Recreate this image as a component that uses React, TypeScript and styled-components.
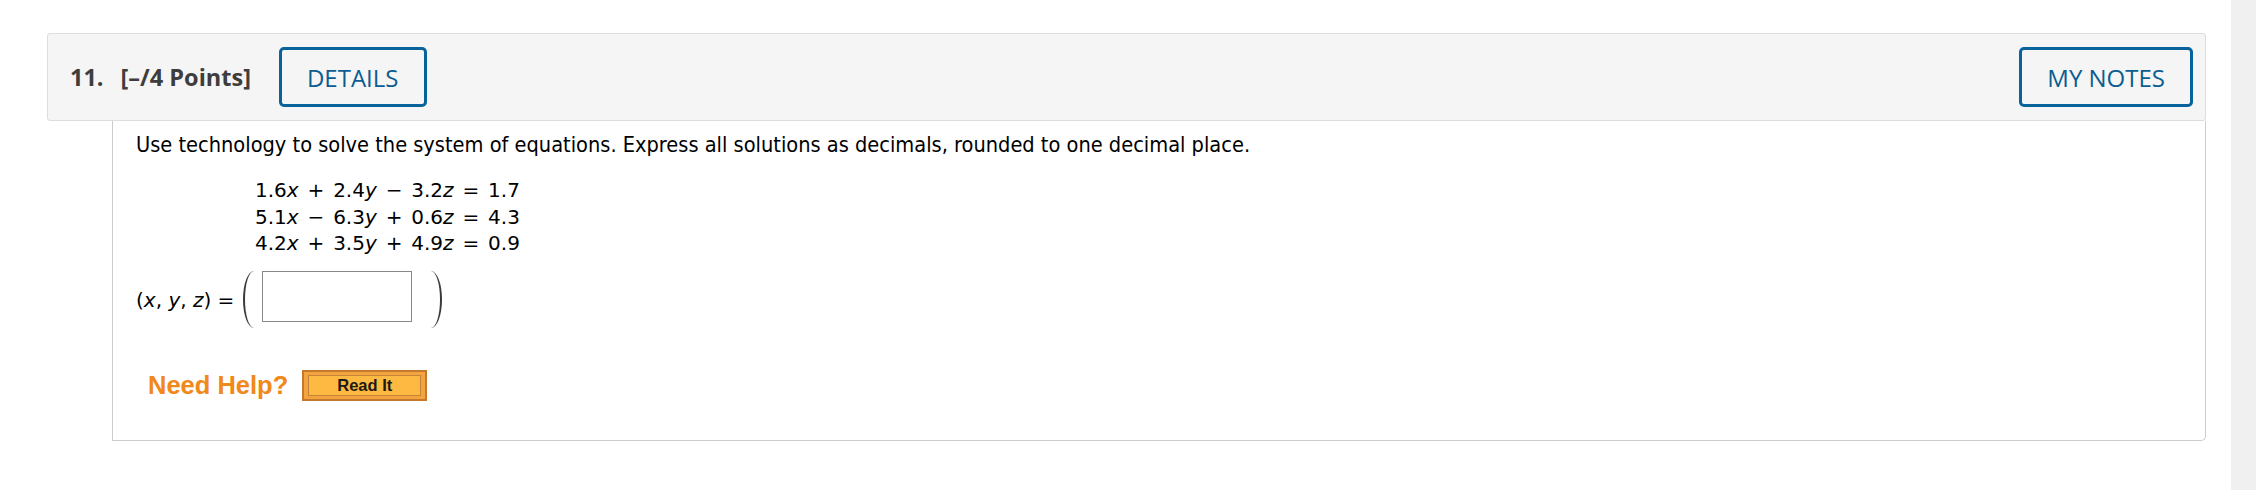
import React from "react";
import styled, { createGlobalStyle } from "styled-components";

const GlobalStyle = createGlobalStyle`
  html, body {
    margin: 0;
    padding: 0;
    background: #ffffff;
  }
  * {
    box-sizing: border-box;
  }
`;

const Page = styled.div`
  display: flex;
  min-height: 490px;
  width: 2256px;
`;

const Main = styled.main`
  flex: 1;
  padding: 33px 25px 0 47px;
`;

const Scrollbar = styled.div`
  width: 25px;
  background: #f0f0f0;
`;

const Header = styled.header`
  display: flex;
  align-items: center;
  height: 88px;
  padding: 0 12px 0 22px;
  background: #f5f5f5;
  border: 1px solid #dddddd;
  border-radius: 3px;
  font-family: "Open Sans", "Liberation Sans", sans-serif;
`;

const Number = styled.span`
  font-size: 23.5px;
  font-weight: 700;
  color: #3d3d3d;
  margin-right: 17px;
`;

const Points = styled.span`
  font-size: 23.5px;
  font-weight: 700;
  color: #3d3d3d;
  margin-right: 28px;
`;

const OutlineButton = styled.button<{ $push?: boolean }>`
  height: 60px;
  padding: 0 25px;
  margin-left: ${(p) => (p.$push ? "auto" : "0")};
  background: transparent;
  border: 3px solid #08639c;
  border-radius: 5px;
  font-family: "Open Sans", "Liberation Sans", sans-serif;
  font-size: 24px;
  font-weight: 400;
  color: #0b5d92;
  cursor: pointer;
`;

const Body = styled.section`
  margin-left: 65px;
  height: 320px;
  padding: 11px 23px 0 23px;
  border: 1px solid #cccccc;
  border-top: none;
  border-bottom-right-radius: 5px;
  color: #000000;
`;

const Prompt = styled.p`
  margin: 0;
  font-family: "DejaVu Sans Condensed", "DejaVu Sans", sans-serif;
  font-stretch: condensed;
  font-size: 21.6px;
  line-height: 25px;
`;

const Equations = styled.div`
  margin: 20px 0 0 119px;
  font-family: "DejaVu Sans", "Liberation Sans", sans-serif;
  font-size: 20px;
  line-height: 26.7px;
  word-spacing: 2.5px;
`;

const EqLine = styled.div`
  white-space: pre;
`;

const Var = styled.i`
  font-style: italic;
`;

const AnswerRow = styled.div`
  display: flex;
  align-items: center;
  height: 57px;
  margin-top: 14px;
  font-family: "DejaVu Sans", "Liberation Sans", sans-serif;
  font-size: 20px;
  line-height: 24px;
`;

const Label = styled.span`
  white-space: pre;
  margin-right: 9px;
`;

const Paren = styled.span<{ $right?: boolean }>`
  display: block;
  width: 22px;
  height: 57px;
  border-radius: 50%;
  border: 0 solid #3a3a3a;
  border-left-width: ${(p) => (p.$right ? "0" : "2.5px")};
  border-right-width: ${(p) => (p.$right ? "2.5px" : "0")};
  margin-left: ${(p) => (p.$right ? "-7px" : "0")};
  margin-right: ${(p) => (p.$right ? "0" : "-3px")};
`;

const AnswerInput = styled.input`
  align-self: flex-start;
  width: 150px;
  height: 51px;
  margin-right: 15px;
  border: 1px solid #888888;
  background: #ffffff;
  outline: none;
`;

const HelpRow = styled.div`
  display: flex;
  align-items: center;
  gap: 14px;
  margin-top: 42px;
  padding-left: 12px;
`;

const HelpText = styled.span`
  font-family: "Liberation Sans", Arial, sans-serif;
  font-size: 25.5px;
  font-weight: 700;
  color: #f0881a;
`;

const ReadButton = styled.button`
  width: 125px;
  height: 31px;
  padding: 3px 4px;
  background: #f4a43e;
  border: 2px solid #c47a2c;
  display: flex;
  cursor: pointer;
`;

const ReadInner = styled.span`
  flex: 1;
  display: flex;
  align-items: center;
  justify-content: center;
  background: #fdb942;
  border: 1px solid #c3843a;
  font-family: "Liberation Sans", Arial, sans-serif;
  font-size: 16.5px;
  font-weight: 700;
  color: #1d1a14;
`;

const equations: [string, string, string, string, string, string][] = [
  ["1.6", "+", "2.4", "\u2212", "3.2", "1.7"],
  ["5.1", "\u2212", "6.3", "+", "0.6", "4.3"],
  ["4.2", "+", "3.5", "+", "4.9", "0.9"],
];

export default function App() {
  return (
    <>
      <GlobalStyle />
      <Page>
        <Main>
          <Header>
            <Number>11.</Number>
            <Points>[&ndash;/4 Points]</Points>
            <OutlineButton>DETAILS</OutlineButton>
            <OutlineButton $push>MY NOTES</OutlineButton>
          </Header>
          <Body>
            <Prompt>
              Use technology to solve the system of equations. Express all solutions as decimals,
              rounded to one decimal place.
            </Prompt>
            <Equations>
              {equations.map(([a, op1, b, op2, c, r]) => (
                <EqLine key={a + b + c}>
                  {a}
                  <Var>x</Var> {op1} {b}
                  <Var>y</Var> {op2} {c}
                  <Var>z</Var> = {r}
                </EqLine>
              ))}
            </Equations>
            <AnswerRow>
              <Label>
                (<Var>x</Var>, <Var>y</Var>, <Var>z</Var>) =
              </Label>
              <Paren />
              <AnswerInput type="text" aria-label="answer" />
              <Paren $right />
            </AnswerRow>
            <HelpRow>
              <HelpText>Need Help?</HelpText>
              <ReadButton>
                <ReadInner>Read It</ReadInner>
              </ReadButton>
            </HelpRow>
          </Body>
        </Main>
        <Scrollbar />
      </Page>
    </>
  );
}
